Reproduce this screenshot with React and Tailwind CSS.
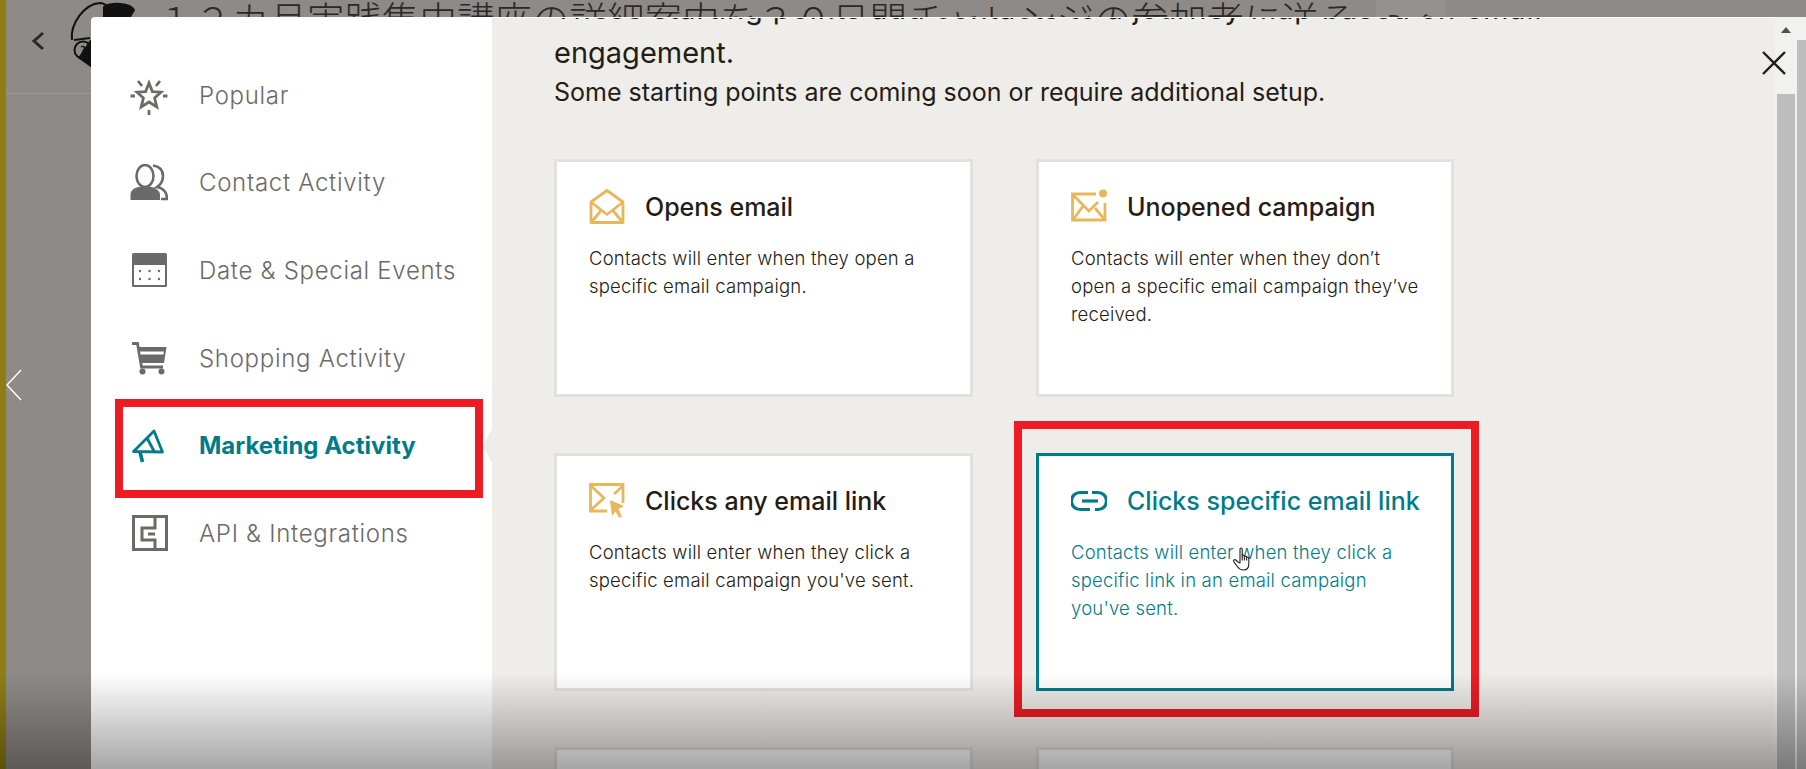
const GRAY = "#6b6a69";
const TEAL = "#007c89";
const GOLD = "#e8b75c";

function StarIcon() {
  return (
    <svg viewBox="0 0 38 38" className="h-[38px] w-[38px]" fill="none" stroke={GRAY} strokeWidth="2.8">
      <path d="M19 6 L22.4 14.6 L31 15.2 L24.6 21 L26.8 30 L19 25 L11.2 30 L13.4 21 L7 15.2 L15.6 14.6 Z" />
      <path d="M8 4 L12 9 M30 4 L26 9 M0.5 19 H5 M33 19 H37.5 M19 33 V38" />
    </svg>
  );
}
function ContactIcon() {
  return (
    <svg viewBox="0 0 38 38" className="h-[38px] w-[38px]" fill="none" stroke={GRAY} strokeWidth="2.6">
      <ellipse cx="15" cy="12" rx="8.5" ry="11" />
      <path d="M0.5 36 V30 Q1 25 8 23 L22 23 Q29 25 30 30 V36 Z" fill={GRAY} stroke="none" />
      <path d="M23 1.5 Q33 3 33 12 Q33 19 27 23 Q37 25 37 35 L31 35" />
    </svg>
  );
}
function CalendarIcon() {
  return (
    <svg viewBox="0 0 38 38" className="h-[38px] w-[38px]">
      <rect x="2" y="1" width="35" height="34" rx="1.5" fill={GRAY} />
      <rect x="4" y="13" width="31" height="20" fill="#fff" />
      <g fill={GRAY}>
        <circle cx="10" cy="19" r="1.2" /><circle cx="19.5" cy="19" r="1.2" /><circle cx="29" cy="19" r="1.2" />
        <circle cx="10" cy="27" r="1.2" /><circle cx="19.5" cy="27" r="1.2" /><circle cx="29" cy="27" r="1.2" />
      </g>
    </svg>
  );
}
function CartIcon() {
  return (
    <svg viewBox="0 0 38 38" className="h-[38px] w-[38px]" fill="none">
      <path d="M2 3.5 H7.5 L11.5 27 H33" stroke={GRAY} strokeWidth="2.8" />
      <path d="M8 7 H36.5 L34 23 H10.5 Z" fill={GRAY} />
      <path d="M10 11.5 H34 L33.4 14.5 H10.5 Z" fill="#fff" />
      <circle cx="12.5" cy="31.5" r="3" fill={GRAY} />
      <circle cx="31.5" cy="31.5" r="3" fill={GRAY} />
    </svg>
  );
}
function MegaphoneIcon() {
  return (
    <svg viewBox="0 0 38 38" className="h-[38px] w-[38px]" fill="none" stroke={TEAL} strokeWidth="2.8">
      <path d="M3.5 24.5 L24 4 L32.5 25 Z" strokeLinejoin="round" />
      <path d="M17 11 L24.5 25" />
      <path d="M10 25 L12.5 35" strokeWidth="3.6" />
    </svg>
  );
}
function ApiIcon() {
  return (
    <svg viewBox="0 0 38 38" className="h-[38px] w-[38px]" fill="none" stroke={GRAY} strokeWidth="3">
      <rect x="3.5" y="1.5" width="33" height="33" />
      <path d="M25 2 V13 H12 V25 H25 V34 M18 19 H25" />
    </svg>
  );
}
function OpenMail() {
  return (
    <svg viewBox="0 0 36 36" className="h-9 w-9" fill="none" stroke={GOLD} strokeWidth="2.8" strokeLinejoin="round">
      <path d="M2 13 L18 1.5 L34 13 V33.5 H2 Z" />
      <path d="M2.5 13.5 L18 25.5 L33.5 13.5 M2.5 33 L12.5 21 M33.5 33 L23.5 21" />
    </svg>
  );
}
function UnopenedMail() {
  return (
    <svg viewBox="0 0 36 36" className="h-9 w-9" fill="none" stroke={GOLD} strokeWidth="2.8">
      <path d="M25 5 H1.5 V31 H34 V14" />
      <path d="M2 6 L18 22 L27 13 M2 31 L12 17 M34 31 L24 19" />
      <circle cx="32" cy="4.5" r="4" fill={GOLD} stroke="none" />
    </svg>
  );
}
function ClickMail() {
  return (
    <svg viewBox="0 0 36 36" className="h-9 w-9" fill="none" stroke={GOLD} strokeWidth="2.8">
      <path d="M18 28 H1.5 V1.5 H34 V20" />
      <path d="M2 3 L15 15 L2 27 M34 3 L25 11" />
      <path d="M21 17 L35 23 L29.5 26 L33 34 L30 34.5 L26.5 28.5 L23 33 Z" fill={GOLD} stroke="none" />
    </svg>
  );
}
function LinkIcon() {
  return (
    <svg viewBox="0 0 36 36" className="h-9 w-9" fill="none" stroke={TEAL} strokeWidth="3.2">
      <path d="M17 9.5 H9 A8.5 8.5 0 0 0 9 26.5 H19" />
      <path d="M21 9.5 H27 A8.5 8.5 0 0 1 27 26.5 H24" />
      <path d="M11 18 H27" />
    </svg>
  );
}

function Hand() {
  return (
    <svg viewBox="0 0 19 24" className="absolute left-[194px] top-[91px] h-6 w-[19px]" fill="#fff" stroke="#222" strokeWidth="1.1" strokeLinejoin="round">
      <path d="M7 11 V2.2 C7 0.6 9.2 0.6 9.2 2.2 V9 C9.2 7.8 11.4 7.8 11.4 9.2 V10 C11.4 8.8 13.6 8.8 13.6 10.2 V10.8 C13.6 9.8 15.8 9.8 15.8 11.2 V17 C15.8 20.5 14 23 10.5 23 C7.5 23 6 22 4.5 19.8 L0.8 14.6 C0 13.2 1.6 12 2.8 13 L5 15 L7 16 Z" />
      <path d="M9.2 9 V13.5 M11.4 10 V13.5 M13.6 10.8 V13.5" fill="none" />
    </svg>
  );
}

const navItems = [
  { label: "Popular", Icon: StarIcon },
  { label: "Contact Activity", Icon: ContactIcon },
  { label: "Date & Special Events", Icon: CalendarIcon },
  { label: "Shopping Activity", Icon: CartIcon },
  { label: "Marketing Activity", Icon: MegaphoneIcon, active: true },
  { label: "API & Integrations", Icon: ApiIcon },
];

const cards = [
  { title: "Opens email", desc: "Contacts will enter when they open a specific email campaign.", Icon: OpenMail },
  { title: "Unopened campaign", desc: "Contacts will enter when they don’t open a specific email campaign they’ve received.", Icon: UnopenedMail },
  { title: "Clicks any email link", desc: "Contacts will enter when they click a specific email campaign you've sent.", Icon: ClickMail },
  { title: "Clicks specific email link", desc: "Contacts will enter when they click a specific link in an email campaign you've sent.", Icon: LinkIcon, active: true },
  { title: "", desc: "" },
  { title: "", desc: "" },
];

function Card({ title, desc, Icon, active }) {
  return (
    <div className={`relative h-[238px] border-[3px] bg-white pl-[32px] pr-[29px] pt-[27px] ${active ? "border-[#007c89] text-[#007c89]" : "border-[#e2e1dd] text-[#241c15]"}`}>
      {Icon && (
        <div className="flex h-9 items-center gap-5">
          <Icon />
          <h3 className="whitespace-nowrap text-[25px] font-medium leading-9">{title}</h3>
        </div>
      )}
      {desc && <p className="mt-[19px] text-[18.5px] font-light leading-[28px] tracking-[0.2px]">{desc}</p>}
      {active && (
        <>
          <Hand />
          <div className="absolute left-[-25px] right-[-28px] top-[-35px] bottom-[-29px] border-8 border-[#ed1c24]" />
        </>
      )}
    </div>
  );
}

export default function App() {
  return (
    <div className="relative flex h-[769px] w-[1806px] overflow-hidden bg-[#8e8a87] font-['Inter','Liberation_Sans',sans-serif]">
      <div className="w-[6px] shrink-0 bg-[#8f7d14]" />
      <div className="relative flex h-[94px] flex-1 items-start border-b border-[#9b9794]">
        <svg viewBox="0 0 14 20" className="ml-[25px] mt-[31px] h-5 w-[14px]" fill="none" stroke="#2b2927" strokeWidth="3">
          <path d="M12 2 L3 10 L12 18" />
        </svg>
        <svg viewBox="0 0 80 80" className="ml-[23px] h-20 w-20 shrink-0" fill="none" stroke="#111" strokeWidth="2">
          <path d="M4 40 C2 24 16 4 32 3 C36 3 38 5 40 7" />
          <path d="M36 7 C44 2 62 3 66 10 L60 20 L36 20 Z" fill="#111" />
          <circle cx="15" cy="50" r="8.5" />
          <path d="M13 47 C16 45 18 48 15 51 L15 54" strokeWidth="1.4" />
          <path d="M6 40 L22 38" />
          <path d="M10 58 L24 68 L30 68 L30 40 L22 40 Z" fill="#111" stroke="none" />
        </svg>
        <h1 className="ml-[9px] -mt-[4px] whitespace-nowrap font-['Noto_Sans_CJK_JP',sans-serif] text-[37.5px] font-light leading-[44px] text-[#2b2927]">
          １２カ月実践集中講座の詳細案内を３０日間チャレンジの参加者に送る
        </h1>
        <div className="ml-[19px] h-[40px] rounded-sm bg-[#95918e] px-3 pt-2 text-[20px] text-[#2b2927]">Draft</div>
      </div>

      <svg viewBox="0 0 18 32" className="absolute left-[5px] top-[369px] h-8 w-[18px]" fill="none" stroke="#fff" strokeWidth="1.4">
        <path d="M16 1 L2 16 L16 31" />
      </svg>

      <div className="absolute bottom-0 left-[91px] right-0 top-[17px] flex overflow-hidden rounded-tl-sm bg-white">
        <aside className="w-[401px] shrink-0 pl-[39px] pt-[35px]">
          {navItems.map(({ label, Icon, active }) => (
            <div key={label} className="relative flex h-[87.6px] items-center gap-[31px]">
              <Icon />
              <span className={`whitespace-nowrap text-[24px] ${active ? "font-bold text-[#007c89]" : "font-light tracking-[0.7px] text-[#6b6a69]"}`}>{label}</span>
              {active && (
                <>
                  <div className="absolute left-[-15px] right-[9px] top-[-3px] bottom-[-8px] border-8 border-[#ed1c24]" />
                  <div className="absolute right-0 top-[27px] h-0 w-0 border-y-[17px] border-r-[9px] border-y-transparent border-r-[#eeede9]" />
                </>
              )}
            </div>
          ))}
        </aside>

        <main className="relative flex-1 overflow-hidden border-t border-white bg-[#eeede9] pl-[62px] text-[#241c15]">
          <p className="-mt-[28px] whitespace-nowrap text-[29px] leading-[38px] tracking-[0.9px]">These starting points add contacts to a journey map based on email</p>
          <p className="mt-[6px] text-[29px] leading-[38px]">engagement.</p>
          <p className="mt-[2px] text-[25px] leading-[36px]">Some starting points are coming soon or require additional setup.</p>
          <div className="mt-[49px] grid grid-cols-[419px_418px] gap-x-[63px] gap-y-[56px]">
            {cards.map((c, i) => <Card key={i} {...c} />)}
          </div>
        </main>

        <div className="flex w-[22px] shrink-0 flex-col items-center bg-[#f1f1f0]">
          <div className="mb-[61px] mt-[10px] h-0 w-0 border-x-[5px] border-b-[6px] border-x-transparent border-b-[#505050]" />
          <div className="w-[18px] flex-1 bg-[#bdbdbd]" />
        </div>
        <div className="w-[9px] shrink-0 bg-[#f1f1f0] pt-[23px]">
          <div className="h-full w-full bg-[#bdbdbd]" />
        </div>

        <button className="absolute right-[20px] top-[34px] h-6 w-6 text-[#241c15]">
          <svg viewBox="0 0 24 24" className="h-6 w-6" fill="none" stroke="currentColor" strokeWidth="2.4">
            <path d="M1 1 L23 23 M23 1 L1 23" />
          </svg>
        </button>
      </div>

      <div className="pointer-events-none absolute inset-x-0 bottom-0 h-[96px] bg-gradient-to-b from-transparent to-black/35" />
    </div>
  );
}
